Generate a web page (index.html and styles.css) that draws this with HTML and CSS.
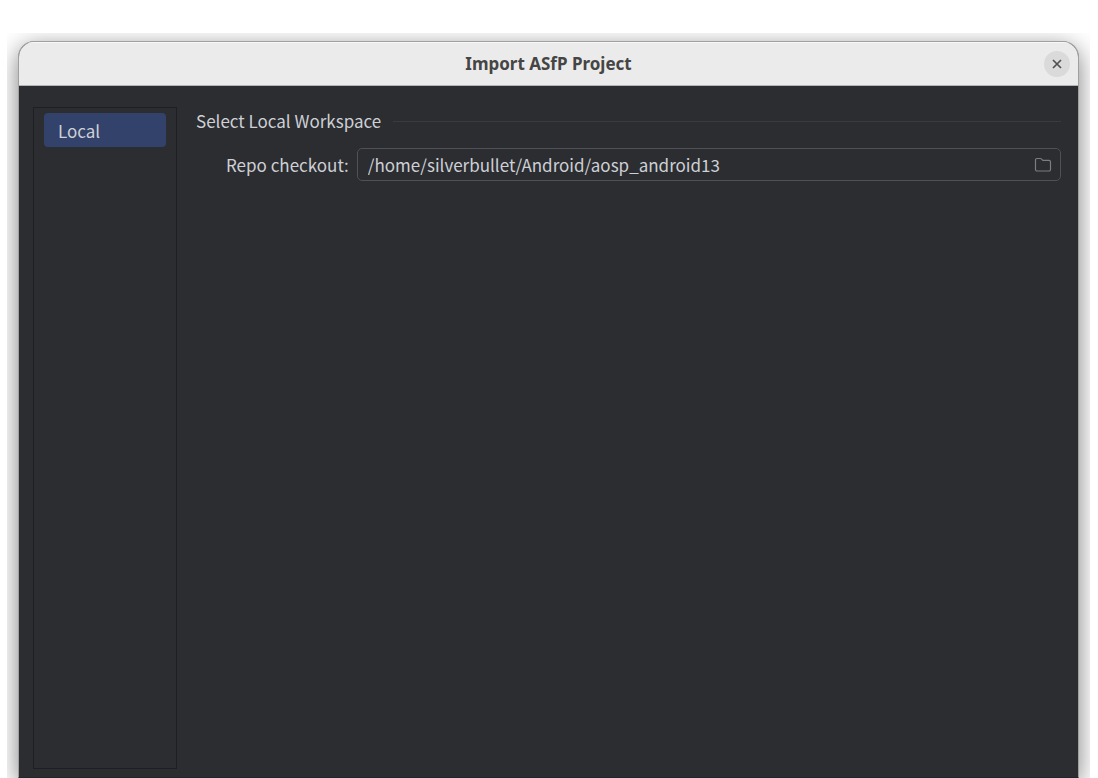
FILE: index.html
```
<!DOCTYPE html>
<html lang="en">
<head>
    <meta charset="UTF-8">
    <meta name="viewport" content="width=device-width, initial-scale=1.0">
    <title>Import ASfP Project</title>
    <link rel="stylesheet" href="styles.css">
</head>
<body>
    <div class="backdrop">
        <div class="window">
            <header class="titlebar">
                <h1 class="title">Import ASfP Project</h1>
                <button class="close" type="button" aria-label="Close">
                    <svg width="12" height="12" viewBox="0 0 12 12">
                        <path d="M2 2l8 8M10 2l-8 8" fill="none" stroke="#505050" stroke-width="1.7"/>
                    </svg>
                </button>
            </header>

            <div class="content">
                <!-- Workspace types -->
                <nav class="sidebar">
                    <button class="source" type="button">Local</button>
                </nav>

                <main class="panel">
                    <h2 class="section">Select Local Workspace</h2>
                    <div class="row">
                        <label for="repo">Repo checkout:</label>
                        <div class="field">
                            <input type="text" id="repo" value="/home/silverbullet/Android/aosp_android13" spellcheck="false">
                            <button class="browse" type="button" aria-label="Browse">
                                <svg width="18" height="16" viewBox="0 0 18 16">
                                    <path d="M1.5 3a1.5 1.5 0 0 1 1.5-1.5h3.3a1.5 1.5 0 0 1 1 .4l1.6 1.5h6.1a1.5 1.5 0 0 1 1.5 1.5v7.6a1.5 1.5 0 0 1-1.5 1.5H3a1.5 1.5 0 0 1-1.5-1.5z" fill="none" stroke="#7b7d82" stroke-width="1.2"/>
                                </svg>
                            </button>
                        </div>
                    </div>
                </main>
            </div>
        </div>
    </div>
</body>
</html>
```
FILE: styles.css
```
* {
    box-sizing: border-box;
}
body {
    margin: 0;
    height: 100vh;
    padding: 33px 8px 0 7px;
    background-color: #fff;
    color: #ced0d6;
    font-family: "Noto Sans CJK SC", sans-serif;
    font-size: 17px;
    overflow: hidden;
}
button {
    border: none;
    padding: 0;
    color: inherit;
    font: inherit;
}
.backdrop {
    height: 100%;
    padding: 8px 11px 0;
    overflow: hidden;
}
.window {
    display: flex;
    flex-direction: column;
    height: 100%;
    border: 1px solid #a0a0a0;
    border-bottom: 1px solid #242528;
    border-radius: 16px 16px 0 0;
    background-color: #2b2d30;
    box-shadow: 0 6px 24px rgba(0, 0, 0, 0.5);
    overflow: hidden;
}
.titlebar {
    display: grid;
    grid-template-columns: 1fr auto 1fr;
    align-items: center;
    height: 44px;
    padding: 0 8px;
    border-bottom: 1px solid #b4b4b4;
    background-color: #ebebeb;
    box-shadow: inset 0 1px #f8f8f8;
}
.title {
    grid-column: 2;
    margin: 0;
    color: #454545;
    font-family: "Noto Sans", sans-serif;
    font-size: 17px;
    font-weight: bold;
}
.close {
    display: flex;
    align-items: center;
    justify-content: center;
    justify-self: end;
    width: 26px;
    height: 26px;
    border-radius: 50%;
    background-color: #dadada;
}
.content {
    display: flex;
    flex: 1;
    gap: 19px;
    padding: 21px 17px 8px 14px;
}
.sidebar {
    width: 144px;
    padding: 5px 10px;
    border: 1px solid #1e1f22;
}
.source {
    width: 100%;
    height: 34px;
    padding: 0 14px;
    border-radius: 4px;
    background-color: #33426b;
    text-align: left;
}
.panel {
    flex: 1;
}
.section {
    display: flex;
    align-items: center;
    gap: 12px;
    margin: 0;
    font-size: 17px;
    font-weight: normal;
    line-height: 28px;
}
.section::after {
    content: "";
    flex: 1;
    height: 1px;
    background-color: #393b40;
}
.row {
    display: flex;
    align-items: center;
    gap: 8px;
    margin-top: 13px;
    padding-left: 30px;
}
.field {
    display: flex;
    flex: 1;
    align-items: center;
    height: 33px;
    padding: 0 8px 0 10px;
    border: 1px solid #4e5157;
    border-radius: 5px;
}
.field input {
    flex: 1;
    min-width: 0;
    padding: 0;
    border: none;
    outline: none;
    background: none;
    color: inherit;
    font: inherit;
}
.browse {
    display: flex;
    background: none;
}
```
